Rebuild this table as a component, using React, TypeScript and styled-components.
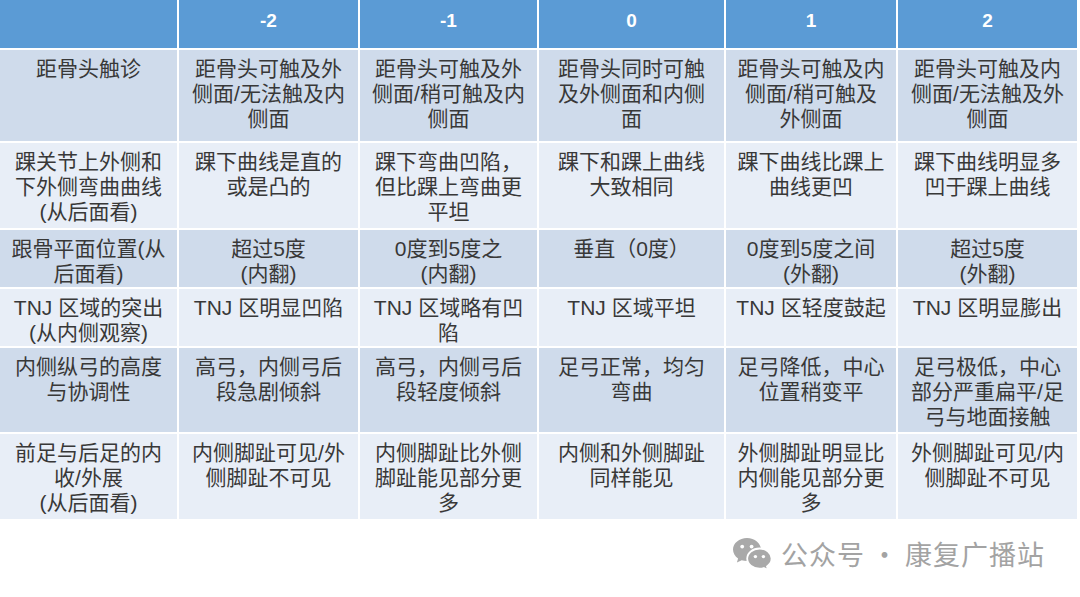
import React from "react";
import styled, { createGlobalStyle } from "styled-components";

const GlobalStyle = createGlobalStyle`
  html, body {
    margin: 0;
    padding: 0;
    background: #ffffff;
  }
  body {
    font-family: "Liberation Sans", "Noto Sans CJK SC", sans-serif;
  }
`;

const Page = styled.div`
  width: 1080px;
  height: 597px;
  display: flex;
  flex-direction: column;
  background: #ffffff;
  overflow: hidden;
`;

const Table = styled.div`
  width: 1077px;
  display: grid;
  grid-template-columns: 177px 179px 177px 185px 170px 179px;
  grid-template-rows: 48px 91px 85px 57px 57px 84px 85px;
  gap: 2px;
  background: #ffffff;
`;

const HeaderCell = styled.div`
  background: #5b9bd5;
  color: #ffffff;
  font-family: "Liberation Sans", Arial, sans-serif;
  font-weight: 700;
  font-size: 19px;
  line-height: 22px;
  text-align: center;
  padding-top: 10px;
  box-sizing: border-box;
`;

const BodyCell = styled.div<{ $tone: "dark" | "light" }>`
  background: ${(p) => (p.$tone === "dark" ? "#cfdbeb" : "#e8eef7")};
  color: #383838;
  font-family: "Liberation Sans", "Noto Sans CJK SC", sans-serif;
  font-size: 21px;
  line-height: 25px;
  text-align: center;
  padding-top: 6px;
  box-sizing: border-box;
  overflow: hidden;
`;

const Line = styled.span`
  display: block;
  white-space: nowrap;
`;

const Watermark = styled.div`
  display: flex;
  justify-content: flex-end;
  align-items: center;
  gap: 8px;
  padding-right: 35px;
  margin-top: 18px;
  color: #a3a3a3;
  font-family: "Noto Sans CJK SC", sans-serif;
  font-size: 27px;
  line-height: 32px;
`;

const WatermarkText = styled.span`
  letter-spacing: 1px;
`;

const Dot = styled.span`
  margin: 0 6px;
`;

const WeChatIcon = () => (
  <svg width="41" height="33" viewBox="0 0 41 33" aria-hidden="true">
    <path
      d="M15 1C7.3 1 1 6.2 1 12.6c0 3.6 2 6.8 5.1 8.9L4.9 25.6l4.8-2.4c1.7.5 3.4.8 5.3.8 7.7 0 14-5.2 14-11.4S22.7 1 15 1z"
      fill="#a9a9a9"
    />
    <circle cx="10.2" cy="9.6" r="1.9" fill="#ffffff" />
    <circle cx="19.6" cy="9.6" r="1.9" fill="#ffffff" />
    <path
      d="M27.5 11.5c-6.8 0-12.3 4.5-12.3 10.1S20.7 31.7 27.5 31.7c1.5 0 3-.2 4.3-.7l4.3 2.1-1.1-3.7c2.8-1.8 4.6-4.6 4.6-7.8 0-5.6-5.3-10.1-12.1-10.1z"
      fill="#a9a9a9"
      stroke="#ffffff"
      strokeWidth="1.8"
    />
    <circle cx="23.4" cy="19.6" r="1.7" fill="#ffffff" />
    <circle cx="31.4" cy="19.6" r="1.7" fill="#ffffff" />
  </svg>
);

type Tone = "dark" | "light";

const headers = ["", "-2", "-1", "0", "1", "2"];

const rows: { tone: Tone; cells: string[][] }[] = [
  {
    tone: "dark",
    cells: [
      ["距骨头触诊"],
      ["距骨头可触及外", "侧面/无法触及内", "侧面"],
      ["距骨头可触及外", "侧面/稍可触及内", "侧面"],
      ["距骨头同时可触", "及外侧面和内侧", "面"],
      ["距骨头可触及内", "侧面/稍可触及", "外侧面"],
      ["距骨头可触及内", "侧面/无法触及外", "侧面"],
    ],
  },
  {
    tone: "light",
    cells: [
      ["踝关节上外侧和", "下外侧弯曲曲线", "(从后面看)"],
      ["踝下曲线是直的", "或是凸的"],
      ["踝下弯曲凹陷，", "但比踝上弯曲更", "平坦"],
      ["踝下和踝上曲线", "大致相同"],
      ["踝下曲线比踝上", "曲线更凹"],
      ["踝下曲线明显多", "凹于踝上曲线"],
    ],
  },
  {
    tone: "dark",
    cells: [
      ["跟骨平面位置(从", "后面看)"],
      ["超过5度", "(内翻)"],
      ["0度到5度之", "(内翻)"],
      ["垂直（0度）"],
      ["0度到5度之间", "(外翻)"],
      ["超过5度", "(外翻)"],
    ],
  },
  {
    tone: "light",
    cells: [
      ["TNJ 区域的突出", "(从内侧观察)"],
      ["TNJ 区明显凹陷"],
      ["TNJ 区域略有凹", "陷"],
      ["TNJ 区域平坦"],
      ["TNJ 区轻度鼓起"],
      ["TNJ 区明显膨出"],
    ],
  },
  {
    tone: "dark",
    cells: [
      ["内侧纵弓的高度", "与协调性"],
      ["高弓，内侧弓后", "段急剧倾斜"],
      ["高弓，内侧弓后", "段轻度倾斜"],
      ["足弓正常，均匀", "弯曲"],
      ["足弓降低，中心", "位置稍变平"],
      ["足弓极低，中心", "部分严重扁平/足", "弓与地面接触"],
    ],
  },
  {
    tone: "light",
    cells: [
      ["前足与后足的内", "收/外展", "(从后面看)"],
      ["内侧脚趾可见/外", "侧脚趾不可见"],
      ["内侧脚趾比外侧", "脚趾能见部分更", "多"],
      ["内侧和外侧脚趾", "同样能见"],
      ["外侧脚趾明显比", "内侧能见部分更", "多"],
      ["外侧脚趾可见/内", "侧脚趾不可见"],
    ],
  },
];

export default function App() {
  return (
    <>
      <GlobalStyle />
      <Page>
        <Table>
          {headers.map((h, i) => (
            <HeaderCell key={`h${i}`}>{h}</HeaderCell>
          ))}
          {rows.map((row, r) =>
            row.cells.map((lines, c) => (
              <BodyCell key={`c${r}-${c}`} $tone={row.tone}>
                {lines.map((t, k) => (
                  <Line key={k}>{t}</Line>
                ))}
              </BodyCell>
            ))
          )}
        </Table>
        <Watermark>
          <WeChatIcon />
          <WatermarkText>
            公众号<Dot>·</Dot>康复广播站
          </WatermarkText>
        </Watermark>
      </Page>
    </>
  );
}
